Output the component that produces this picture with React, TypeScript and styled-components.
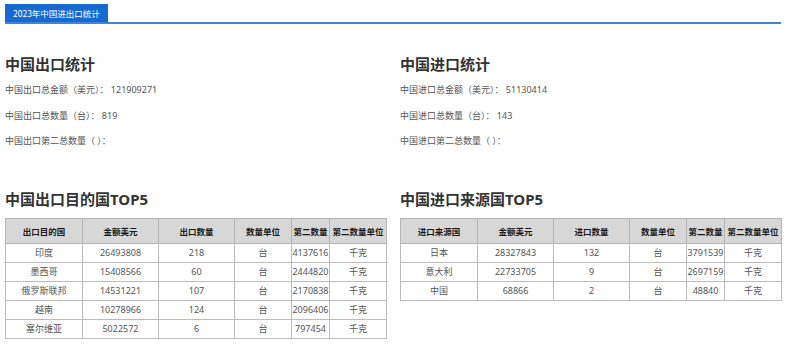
import React from 'react';
import styled, { createGlobalStyle } from 'styled-components';

const GlobalStyle = createGlobalStyle`
  body {
    margin: 0;
    background: #fff;
    font-family: "Noto Sans", "Noto Sans CJK SC", sans-serif;
  }
`;

const Page = styled.div`
  width: 776px;
  padding: 4px 5px 0;
`;

const TabBar = styled.div`
  display: flex;
  border-bottom: 2px solid #3f84db;
`;

const Tab = styled.div`
  height: 18px;
  padding: 0 8px;
  display: flex;
  align-items: center;
  background: #1569d1;
  color: #fff;
  font-size: 8.5px;
  font-family: "Noto Sans CJK SC", sans-serif;
`;

const Columns = styled.div`
  display: grid;
  grid-template-columns: 381px 381px;
  column-gap: 14px;
  margin-top: 30px;
`;

const Column = styled.div`
  display: flex;
  flex-direction: column;
`;

const Title = styled.h2<{ $gap?: number }>`
  margin: ${(p) => p.$gap || 0}px 0 0 0;
  font-size: 15px;
  line-height: 20px;
  font-weight: bold;
  color: #333;
`;

const Info = styled.p`
  margin: 0;
  font-size: 9px;
  line-height: 25.5px;
  color: #555;
  &:first-of-type {
    margin-top: 3px;
  }
`;

const Table = styled.table`
  margin-top: 9px;
  width: 381px;
  table-layout: fixed;
  border-collapse: collapse;
  border: 1px solid #a8a8a8;
`;

const HeadCell = styled.th`
  height: 24px;
  padding: 0;
  background: #d7d7d7;
  border: 1px solid #b4b4b4;
  font-size: 8.5px;
  font-weight: bold;
  color: #1a1a1a;
  text-align: center;
  white-space: nowrap;
`;

const Cell = styled.td`
  height: 18px;
  padding: 0;
  border: 1px solid #bcbcbc;
  font-size: 9px;
  color: #555;
  text-align: center;
  white-space: nowrap;
`;

const colWidths = [77, 76, 76, 57, 38, 57];

type Row = [string, string, string, string, string, string];

interface SectionProps {
  title: string;
  info: string[];
  tableTitle: string;
  head: Row;
  rows: Row[];
}

const Section: React.FC<SectionProps> = ({ title, info, tableTitle, head, rows }) => (
  <Column>
    <Title>{title}</Title>
    {info.map((line) => (
      <Info key={line}>{line}</Info>
    ))}
    <Title $gap={35}>{tableTitle}</Title>
    <Table>
      <colgroup>
        {colWidths.map((w, i) => (
          <col key={i} style={{ width: w }} />
        ))}
      </colgroup>
      <thead>
        <tr>
          {head.map((h) => (
            <HeadCell key={h}>{h}</HeadCell>
          ))}
        </tr>
      </thead>
      <tbody>
        {rows.map((r) => (
          <tr key={r[0]}>
            {r.map((c, i) => (
              <Cell key={i}>{c}</Cell>
            ))}
          </tr>
        ))}
      </tbody>
    </Table>
  </Column>
);

const exportRows: Row[] = [
  ['印度', '26493808', '218', '台', '4137616', '千克'],
  ['墨西哥', '15408566', '60', '台', '2444820', '千克'],
  ['俄罗斯联邦', '14531221', '107', '台', '2170838', '千克'],
  ['越南', '10278966', '124', '台', '2096406', '千克'],
  ['塞尔维亚', '5022572', '6', '台', '797454', '千克']
];

const importRows: Row[] = [
  ['日本', '28327843', '132', '台', '3791539', '千克'],
  ['意大利', '22733705', '9', '台', '2697159', '千克'],
  ['中国', '68866', '2', '台', '48840', '千克']
];

const App: React.FC = () => (
  <>
    <GlobalStyle />
    <Page>
      <TabBar>
        <Tab>2023年中国进出口统计</Tab>
      </TabBar>
      <Columns>
        <Section
          title="中国出口统计"
          info={['中国出口总金额（美元）： 121909271', '中国出口总数量（台）： 819', '中国出口第二总数量（ ）：']}
          tableTitle="中国出口目的国TOP5"
          head={['出口目的国', '金额美元', '出口数量', '数量单位', '第二数量', '第二数量单位']}
          rows={exportRows}
        />
        <Section
          title="中国进口统计"
          info={['中国进口总金额（美元）： 51130414', '中国进口总数量（台）： 143', '中国进口第二总数量（ ）：']}
          tableTitle="中国进口来源国TOP5"
          head={['进口来源国', '金额美元', '进口数量', '数量单位', '第二数量', '第二数量单位']}
          rows={importRows}
        />
      </Columns>
    </Page>
  </>
);

export default App;
